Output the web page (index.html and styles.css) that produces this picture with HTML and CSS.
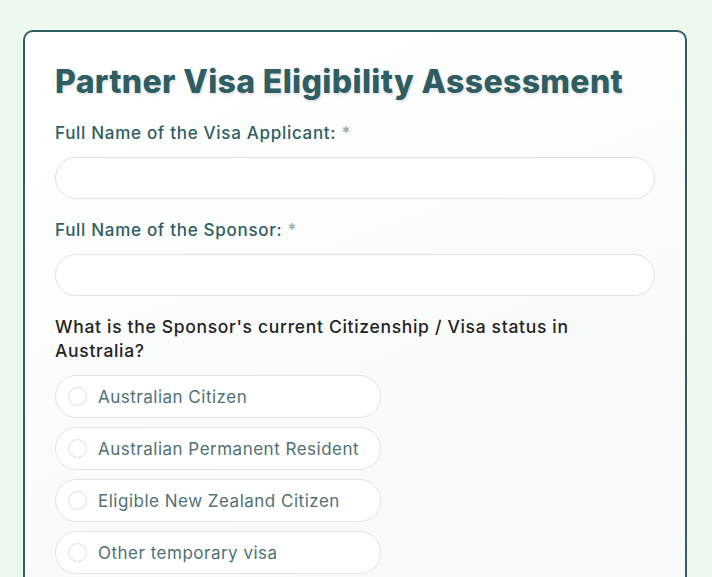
FILE: index.html
```html
<!DOCTYPE html>
<html lang="en">
<head>
<meta charset="utf-8">
<title>Partner Visa Eligibility Assessment</title>
<link rel="stylesheet" href="styles.css">
</head>
<body>
<div class="card">
  <h1 class="title">Partner Visa Eligibility Assessment</h1>
  <div class="field">
    <label class="label" for="applicant">Full Name of the Visa Applicant: <span class="req">*</span></label>
    <input class="input" id="applicant" type="text">
  </div>
  <div class="field">
    <label class="label" for="sponsor">Full Name of the Sponsor: <span class="req">*</span></label>
    <input class="input" id="sponsor" type="text">
  </div>
  <div class="field">
    <p class="question">What is the Sponsor's current Citizenship / Visa status in Australia?</p>
    <div class="options">
      <label class="option"><span class="radio"></span><span class="opt-text">Australian Citizen</span></label>
      <label class="option"><span class="radio"></span><span class="opt-text">Australian Permanent Resident</span></label>
      <label class="option"><span class="radio"></span><span class="opt-text">Eligible New Zealand Citizen</span></label>
      <label class="option"><span class="radio"></span><span class="opt-text">Other temporary visa</span></label>
    </div>
  </div>
</div>
</body>
</html>
```
FILE: styles.css
```css
* { box-sizing: border-box; }
html, body { margin: 0; height: 100%; overflow: hidden; }
body {
  background: #edf8ef;
  font-family: "Inter", "Noto Sans", sans-serif;
  padding: 30px 25px 0 23px;
}
.card {
  border: 2px solid #2f5f63;
  border-radius: 10px;
  background: linear-gradient(160deg, #ffffff 0%, #f6f9f8 100%);
  padding: 30px 30px 40px;
}
.title {
  margin: 0 0 19px;
  font-size: 32px;
  line-height: 40px;
  font-weight: 800;
  color: #2e5d62;
  letter-spacing: 0.35px;
  text-shadow: 1px 2px 3px rgba(0,0,0,0.12);
}
.field { margin-bottom: 19px; }
.label {
  display: block;
  font-size: 17px;
  line-height: 24px;
  font-weight: 500;
  color: #2f5f63;
  margin-bottom: 12px;
  letter-spacing: 0.7px;
}
.req { color: #9aa9a9; }
.input {
  display: block;
  width: 100%;
  height: 42px;
  border: 1px solid #dfe2e2;
  border-radius: 21px;
  background: #fff;
  outline: none;
}
.question {
  margin: 0 0 12px;
  font-size: 17.5px;
  line-height: 24px;
  font-weight: 500;
  color: #242424;
  letter-spacing: 0.68px;
}
.options {
  display: flex;
  flex-direction: column;
  gap: 9px;
  width: 326px;
}
.option {
  display: flex;
  align-items: center;
  gap: 11px;
  height: 43px;
  padding: 0 20px 0 12px;
  border: 1px solid #e0e4e4;
  border-radius: 22px;
  background: #fff;
}
.radio {
  width: 19px;
  height: 19px;
  border: 1px solid #d8dddd;
  border-radius: 50%;
  background: #fff;
  flex: none;
}
.opt-text {
  font-size: 17px;
  color: #4f7274;
  letter-spacing: 0.5px;
}
```
